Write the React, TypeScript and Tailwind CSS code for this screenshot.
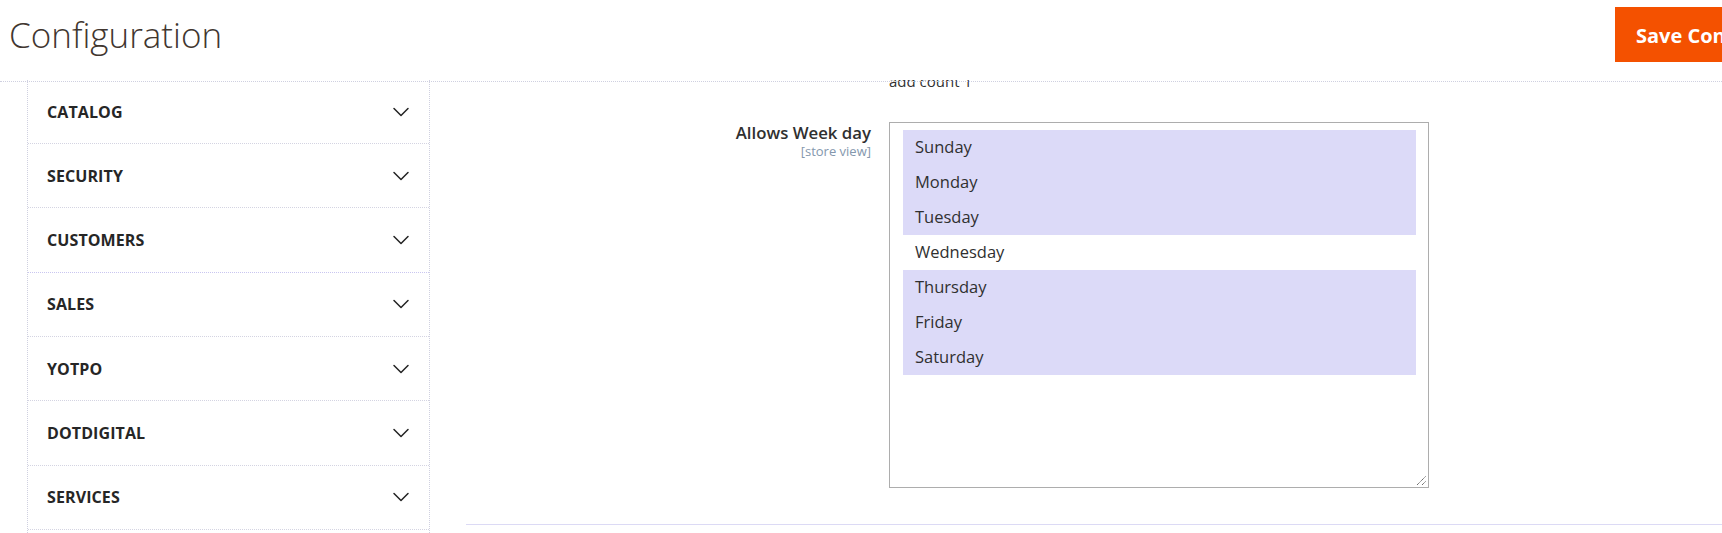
import { ChevronDown } from 'lucide-react'

const sections = ['CATALOG', 'SECURITY', 'CUSTOMERS', 'SALES', 'YOTPO', 'DOTDIGITAL', 'SERVICES']

const days = [
  { name: 'Sunday', selected: true },
  { name: 'Monday', selected: true },
  { name: 'Tuesday', selected: true },
  { name: 'Wednesday', selected: false },
  { name: 'Thursday', selected: true },
  { name: 'Friday', selected: true },
  { name: 'Saturday', selected: true },
]

export default function App() {
  return (
    <div className="w-[1722px] h-[533px] overflow-hidden bg-white font-['Open_Sans',sans-serif] text-[#303030]">
      {/* page header */}
      <header className="h-[80px] flex items-start">
        <h1 className="flex-1 ml-[9px] mt-[11px] text-[35px] leading-[48px] font-light text-[#41362f]">Configuration</h1>
        <div className="w-[107px] shrink-0 mt-[7px]">
          <button className="h-[55px] w-max px-[21px] pt-[3px] bg-[#f45100] text-white text-[20px] font-bold">
            Save Config
          </button>
        </div>
      </header>

      <div className="relative flex h-[453px] overflow-hidden">
        <div className="absolute left-0 right-0 top-[1px] border-t border-dotted border-[#cfd0e0]" />

        {/* config tabs */}
        <nav className="ml-[27px] w-[403px] shrink-0 flex flex-col border-x border-dotted border-[#cfd0e0]">
          {sections.map((s, i) => (
            <div
              key={s}
              className={`${i === 0 ? 'h-[64px]' : 'h-[64.33px]'} shrink-0 flex items-center justify-between pl-[19px] pr-[14px] border-b border-dotted ${
                i === 2 ? 'border-[#c9c6f0]' : 'border-[#d4d4e2]'
              }`}
            >
              <span className="text-[16px] font-bold tracking-[0.1px] text-[#262626]">{s}</span>
              <ChevronDown className="w-[28px] h-[28px] text-[#262626]" strokeWidth={1.3} />
            </div>
          ))}
        </nav>

        {/* settings */}
        <main className="ml-[36px] flex-1 flex flex-col">
          <div className="flex gap-[18px] -mt-[9px]">
            <div className="w-[405px] shrink-0" />
            <p className="text-[15px] leading-[20px]">add count 1</p>
          </div>

          <div className="flex gap-[18px] mt-[31px]">
            <div className="w-[405px] shrink-0 text-right">
              <div className="text-[16.8px] leading-[22px] font-semibold">Allows Week day</div>
              <div className="text-[13px] leading-[15px] text-[#8497ad]">[store view]</div>
            </div>

            <div className="relative w-[540px] h-[366px] border border-[#adadad] pt-[7px] pl-[13px] pr-[12px]">
              {days.map(d => (
                <div
                  key={d.name}
                  className={`h-[35px] flex items-center pl-[12px] text-[16.5px] ${d.selected ? 'bg-[#dcdaf8]' : ''}`}
                >
                  {d.name}
                </div>
              ))}
              <svg className="absolute right-[1px] bottom-[1px]" width="11" height="11" viewBox="0 0 11 11">
                <path d="M1 10 L10 1 M6 10 L10 6" stroke="#555" strokeWidth="1" strokeDasharray="1.2 0.6" />
              </svg>
            </div>
          </div>

          <div className="mt-[36px] border-t border-[#dcdaf5]" />
        </main>
      </div>
    </div>
  )
}
